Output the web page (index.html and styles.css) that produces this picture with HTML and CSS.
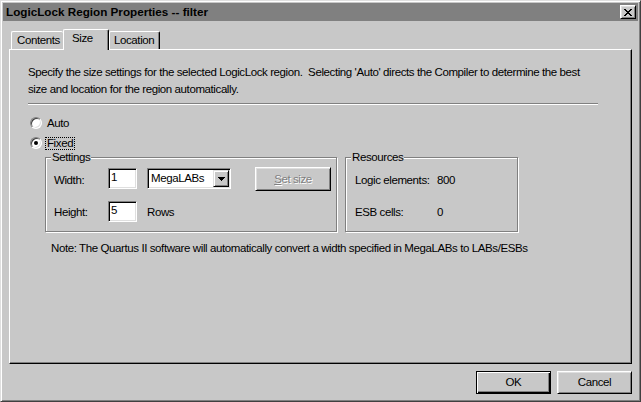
FILE: index.html
```html
<!DOCTYPE html>
<html>
<head>
<meta charset="utf-8">
<title>LogicLock Region Properties -- filter</title>
<link rel="stylesheet" href="styles.css">
</head>
<body>
<div class="window">
  <div class="titlebar">
    <span class="title">LogicLock Region Properties -- filter</span>
    <span class="close"><svg width="8" height="7" viewBox="0 0 8 7"><path d="M0 0h2v1H0z M6 0h2v1H6z M1 1h2v1H1z M5 1h2v1H5z M2 2h4v1H2z M3 3h2v1H3z M2 4h4v1H2z M1 5h2v1H1z M5 5h2v1H5z M0 6h2v1H0z M6 6h2v1H6z" fill="#000"/></svg></span>
  </div>
  <div class="body">
    <div class="tabs">
      <div class="tab first">Contents</div>
      <div class="tab selected">Size</div>
      <div class="tab last">Location</div>
    </div>
    <div class="panel">
      <p class="desc">Specify the size settings for the selected LogicLock region.&nbsp; Selecting 'Auto' directs the Compiler to determine the best<br>size and location for the region automatically.</p>
      <div class="sep"></div>
      <div class="radios">
        <div class="radio"><span class="rbox"></span><span class="rlabel">Auto</span></div>
        <div class="radio"><span class="rbox checked"></span><span class="rlabel focus">Fixed</span></div>
      </div>
      <div class="groups">
        <div class="group settings">
          <span class="glabel">Settings</span>
          <div class="row">
            <span class="lbl">Width:</span>
            <span class="edit">1</span>
            <span class="combo"><span class="ctext">MegaLABs</span><span class="dbtn"><svg width="7" height="4" viewBox="0 0 7 4"><path d="M0 0h7v1H0z M1 1h5v1H1z M2 2h3v1H2z M3 3h1v1H3z" fill="#000"/></svg></span></span>
            <span class="btn setsize"><span class="dis"><u>S</u>et size</span></span>
          </div>
          <div class="row row2">
            <span class="lbl">Height:</span>
            <span class="edit">5</span>
            <span class="lbl unit">Rows</span>
          </div>
        </div>
        <div class="group resources">
          <span class="glabel">Resources</span>
          <div class="row">
            <span class="lbl rl">Logic elements:</span>
            <span class="lbl">800</span>
          </div>
          <div class="row row2">
            <span class="lbl rl">ESB cells:</span>
            <span class="lbl">0</span>
          </div>
        </div>
      </div>
      <p class="note">Note: The Quartus II software will automatically convert a width specified in MegaLABs to LABs/ESBs</p>
    </div>
    <div class="buttons">
      <span class="btn default">OK</span>
      <span class="btn normal">Cancel</span>
    </div>
  </div>
</div>
</body>
</html>
```
FILE: styles.css
```css
* { box-sizing: border-box; }
html, body { margin: 0; padding: 0; }
body {
  width: 641px;
  height: 402px;
  overflow: hidden;
  background: #c8c8c8;
  font-family: "Liberation Sans", Arial, sans-serif;
  font-size: 11.5px;
  letter-spacing: -0.4px;
  color: #000;
}
.window {
  width: 641px;
  height: 402px;
  background: #c8c8c8;
  border: 1px solid;
  border-color: #dfdfdf #404040 #404040 #dfdfdf;
  box-shadow: inset 1px 1px 0 #fff, inset -1px -1px 0 #808080;
  padding: 2px;
  display: flex;
  flex-direction: column;
}
.titlebar {
  height: 18px;
  background: #808080;
  display: flex;
  align-items: center;
  justify-content: space-between;
  padding: 0 2px 0 3px;
}
.title {
  font-family: "Liberation Sans", Arial, sans-serif;
  font-weight: bold;
  font-size: 11.7px;
  letter-spacing: 0;
  line-height: 18px;
  color: #000;
  white-space: nowrap;
}
.close {
  width: 16px;
  height: 14px;
  display: flex;
  align-items: center;
  justify-content: center;
  padding-top: 1px;
  background: #c8c8c8;
  border: 1px solid;
  border-color: #fff #000 #000 #fff;
  box-shadow: inset 1px 1px 0 #dfdfdf, inset -1px -1px 0 #808080;
}
.close svg { display: block; }
.body {
  flex: 1;
  padding: 8px 6px 0 6px;
  display: flex;
  flex-direction: column;
}
.tabs {
  display: flex;
  height: 20px;
  margin-left: 2px;
  position: relative;
  z-index: 1;
}
.tab {
  height: 18px;
  margin-top: 2px;
  border-left: 1px solid #fff;
  border-top: 1px solid #fff;
  border-right: 1px solid #000;
  box-shadow: inset -1px 0 0 #808080;
  border-radius: 2px 2px 0 0;
  text-align: left;
  line-height: 17px;
  white-space: nowrap;
  background: #c8c8c8;
}
.tab.first { width: 52px; border-right: none; box-shadow: none; padding-left: 5px; }
.tab.selected {
  width: 46px;
  height: 21px;
  margin-top: 0;
  padding-left: 8px;
}
.tab.last { width: 51px; padding-left: 4px; }
.panel {
  height: 315px;
  border-top: 1px solid #fff;
  border-left: 1px solid #fff;
  border-right: 1px solid #000;
  border-bottom: 1px solid #000;
  box-shadow: inset -1px -1px 0 #808080;
  padding: 0 0 0 18px;
}
.desc {
  margin: 14px 0 0;
  line-height: 17px;
  white-space: nowrap;
}
.sep {
  width: 570px;
  height: 2px;
  border-top: 1px solid #808080;
  border-bottom: 1px solid #fff;
  margin-top: 5px;
}
.radios { margin-top: 8px; }
.radio {
  height: 20px;
  display: flex;
  align-items: center;
}
.rbox {
  width: 12px;
  height: 12px;
  margin-left: 2px;
  border-radius: 50%;
  background: #fff;
  border: 1px solid;
  border-color: #808080 #fff #fff #808080;
  box-shadow: inset 1px 1px 0 #404040, inset -1px -1px 0 #dfdfdf;
  position: relative;
}
.rbox.checked::after {
  content: "";
  position: absolute;
  left: 3px;
  top: 3px;
  width: 4px;
  height: 4px;
  border-radius: 50%;
  background: #000;
}
.rlabel {
  display: inline-block;
  height: 13px;
  line-height: 11px;
  margin-left: 3px;
  padding: 0 1px;
  border: 1px dotted transparent;
}
.rlabel.focus { border-color: #000; }
.groups {
  display: flex;
  gap: 8px;
  margin-top: 4px;
  margin-left: 17px;
}
.group {
  position: relative;
  height: 75px;
  border: 1px solid #808080;
  box-shadow: inset 1px 1px 0 #fff, 1px 1px 0 #fff;
  padding-top: 9px;
}
.settings { width: 292px; padding-left: 8px; }
.resources { width: 173px; padding-left: 9px; }
.glabel {
  position: absolute;
  top: -8px;
  left: 5px;
  padding: 0 1px;
  line-height: 15px;
  background: #c8c8c8;
}
.row {
  display: flex;
  align-items: flex-start;
  height: 24px;
}
.row2 { margin-top: 8px; }
.lbl {
  line-height: 15px;
  margin-top: 6px;
  white-space: nowrap;
}
.settings .lbl:first-child { width: 54px; }
.unit { margin-left: 10px; }
.rl { width: 82px; }
.edit {
  width: 29px;
  height: 21px;
  margin-top: 1px;
  background: #fff;
  border: 1px solid;
  border-color: #808080 #fff #fff #808080;
  box-shadow: inset 1px 1px 0 #000, inset -1px -1px 0 #dfdfdf;
  padding: 2px 0 0 2px;
  line-height: 13px;
}
.row2 .edit { margin-top: 2px; }
.combo {
  width: 84px;
  height: 21px;
  margin-top: 1px;
  margin-left: 10px;
  background: #fff;
  border: 1px solid;
  border-color: #808080 #fff #fff #808080;
  box-shadow: inset 1px 1px 0 #000, inset -1px -1px 0 #dfdfdf;
  padding: 1px;
  display: flex;
  justify-content: space-between;
}
.ctext {
  padding: 2px 0 0 2px;
  line-height: 13px;
}
.dbtn {
  width: 16px;
  height: 17px;
  background: #c8c8c8;
  border: 1px solid;
  border-color: #dfdfdf #000 #000 #dfdfdf;
  box-shadow: inset 1px 1px 0 #fff, inset -1px -1px 0 #808080;
  display: flex;
  align-items: center;
  justify-content: center;
}
.dbtn svg { display: block; }
.btn {
  display: flex;
  align-items: center;
  justify-content: center;
  background: #c8c8c8;
  white-space: nowrap;
}
.setsize {
  width: 76px;
  height: 24px;
  margin-left: 24px;
  border: 1px solid;
  border-color: #fff #000 #000 #fff;
  box-shadow: inset 1px 1px 0 #dfdfdf, inset -1px -1px 0 #808080;
}
.dis {
  color: #808080;
  text-shadow: 1px 1px 0 #fff;
  line-height: 15px;
}
.note {
  margin: 9px 0 0 23px;
  line-height: 15px;
  white-space: nowrap;
}
.buttons {
  display: flex;
  justify-content: flex-end;
  gap: 6px;
  margin-top: 7px;
}
.buttons .btn {
  width: 75px;
  height: 23px;
  line-height: 15px;
}
.default {
  border: 1px solid #000;
  box-shadow: inset 1px 1px 0 #fff, inset -1px -1px 0 #000, inset -2px -2px 0 #808080;
}
.normal {
  border: 1px solid;
  border-color: #fff #000 #000 #fff;
  box-shadow: inset 1px 1px 0 #dfdfdf, inset -1px -1px 0 #808080;
}
```
